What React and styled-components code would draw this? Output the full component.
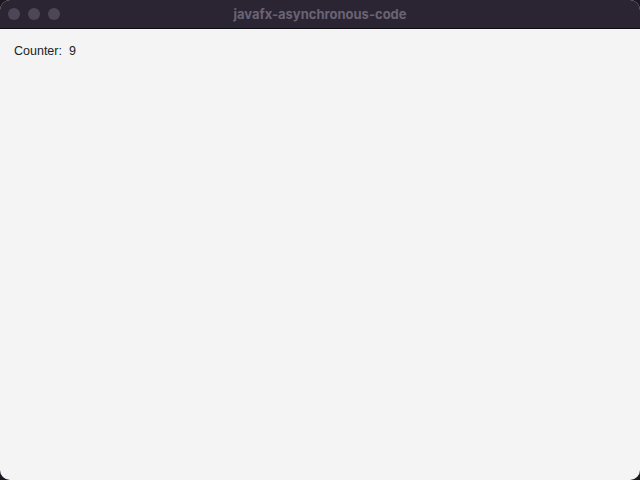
import React from "react";
import styled, { createGlobalStyle } from "styled-components";

const GlobalStyle = createGlobalStyle`
  html, body {
    margin: 0;
    padding: 0;
    background: #1c1822;
  }
`;

const Window = styled.div`
  width: 640px;
  height: 480px;
  display: flex;
  flex-direction: column;
  border-radius: 10px;
  overflow: hidden;
  background: #f4f4f4;
`;

const TitleBar = styled.div`
  height: 28px;
  flex-shrink: 0;
  position: relative;
  display: flex;
  align-items: center;
  justify-content: center;
  background: #2b2533;
  border-bottom: 1px solid #0e0c12;
`;

const Lights = styled.div`
  position: absolute;
  left: 8px;
  top: 8px;
  display: flex;
  gap: 8px;
`;

const Light = styled.span`
  width: 12px;
  height: 12px;
  border-radius: 50%;
  background: #4c4656;
`;

const Title = styled.div`
  font-family: "Inter", "Liberation Sans", sans-serif;
  font-size: 13px;
  font-weight: 700;
  color: #6a6373;
`;

const Content = styled.div`
  flex: 1;
  padding: 15px 14px;
`;

const Row = styled.div`
  display: flex;
  gap: 7px;
  font-family: "Liberation Sans", Arial, sans-serif;
  font-size: 12.5px;
  color: #222222;
`;

function App() {
  const counter = 9;
  return (
    <Window>
      <GlobalStyle />
      <TitleBar>
        <Lights>
          <Light />
          <Light />
          <Light />
        </Lights>
        <Title>javafx-asynchronous-code</Title>
      </TitleBar>
      <Content>
        <Row>
          <span>Counter:</span>
          <span>{counter}</span>
        </Row>
      </Content>
    </Window>
  );
}

export default App;
